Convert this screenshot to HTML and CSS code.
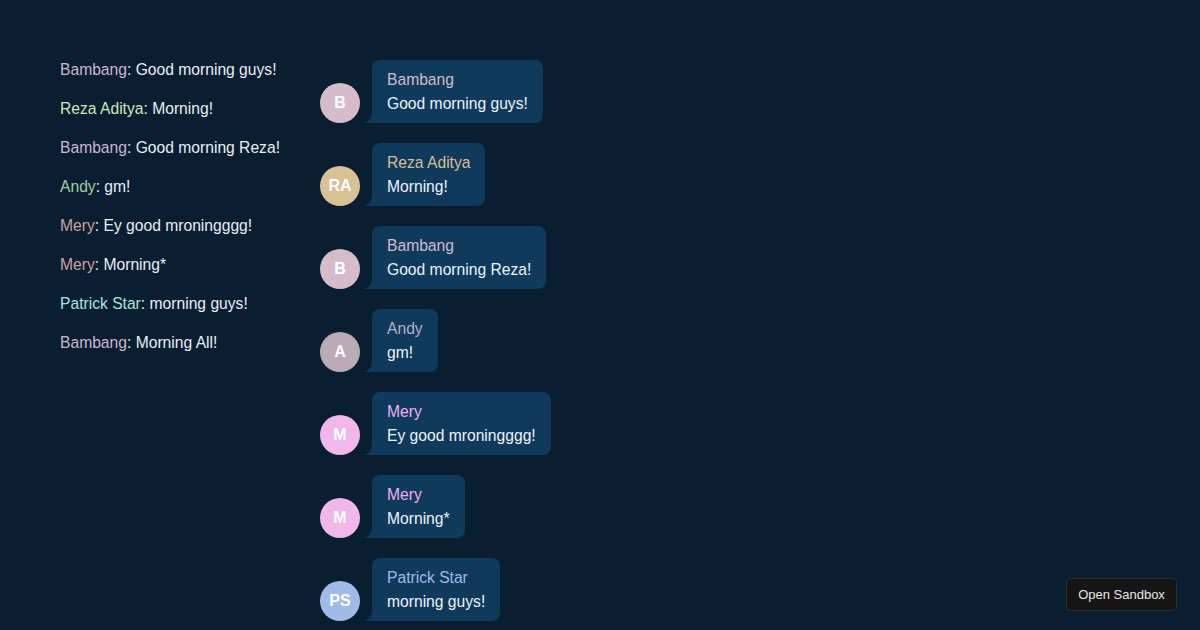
FILE: index.html
```html
<!DOCTYPE html>
<html>
<head>
<meta charset="utf-8">
<link rel="stylesheet" href="styles.css">
</head>
<body>
<div class="page">
  <div class="log">
    <div class="line"><span class="n-bambang">Bambang</span>: Good morning guys!</div>
    <div class="line"><span class="n-reza">Reza Aditya</span>: Morning!</div>
    <div class="line"><span class="n-bambang">Bambang</span>: Good morning Reza!</div>
    <div class="line"><span class="n-andy">Andy</span>: gm!</div>
    <div class="line"><span class="n-mery">Mery</span>: Ey good mroningggg!</div>
    <div class="line"><span class="n-mery">Mery</span>: Morning*</div>
    <div class="line"><span class="n-patrick">Patrick Star</span>: morning guys!</div>
    <div class="line"><span class="n-bambang">Bambang</span>: Morning All!</div>
  </div>
  <div class="chat">
    <div class="msg">
      <div class="avatar a-bambang">B</div>
      <div class="bubble"><div class="name b-bambang">Bambang</div><div class="text">Good morning guys!</div></div>
    </div>
    <div class="msg">
      <div class="avatar a-reza">RA</div>
      <div class="bubble"><div class="name b-reza">Reza Aditya</div><div class="text">Morning!</div></div>
    </div>
    <div class="msg">
      <div class="avatar a-bambang">B</div>
      <div class="bubble"><div class="name b-bambang">Bambang</div><div class="text">Good morning Reza!</div></div>
    </div>
    <div class="msg">
      <div class="avatar a-andy">A</div>
      <div class="bubble"><div class="name b-andy">Andy</div><div class="text">gm!</div></div>
    </div>
    <div class="msg">
      <div class="avatar a-mery">M</div>
      <div class="bubble"><div class="name b-mery">Mery</div><div class="text">Ey good mroningggg!</div></div>
    </div>
    <div class="msg">
      <div class="avatar a-mery">M</div>
      <div class="bubble"><div class="name b-mery">Mery</div><div class="text">Morning*</div></div>
    </div>
    <div class="msg">
      <div class="avatar a-patrick">PS</div>
      <div class="bubble"><div class="name b-patrick">Patrick Star</div><div class="text">morning guys!</div></div>
    </div>
  </div>
</div>
<button class="sandbox">Open Sandbox</button>
</body>
</html>
```

FILE: styles.css
```css
html, body {
  margin: 0;
  padding: 0;
  background: #0a1e31;
  height: 100%;
  overflow: hidden;
}
body {
  font-family: "Liberation Sans", Arial, sans-serif;
  font-size: 15.65px;
  color: #e8eef4;
}
.page {
  display: flex;
  padding: 60px 0 0 60px;
}
.log {
  width: 260px;
  display: flex;
  flex-direction: column;
  gap: 21px;
  padding-top: 1px;
}
.line {
  line-height: 18px;
}
.n-bambang { color: #cdb6cf; }
.n-reza { color: #cbeab6; }
.n-andy { color: #a9cba4; }
.n-mery { color: #cba39f; }
.n-patrick { color: #a4e6dc; }

.chat {
  display: flex;
  flex-direction: column;
  gap: 20px;
}
.msg {
  display: flex;
  align-items: flex-end;
  gap: 12px;
}
.avatar {
  width: 40px;
  height: 40px;
  border-radius: 50%;
  display: flex;
  align-items: center;
  justify-content: center;
  font-weight: bold;
  color: #ffffff;
  font-size: 16px;
  flex-shrink: 0;
}
.a-bambang { background: #d6bccb; }
.a-reza { background: #d8c195; }
.a-andy { background: #baabb6; }
.a-mery { background: #f1b6ea; }
.a-patrick { background: #a0bbe8; }

.bubble {
  position: relative;
  background: #0f3a5c;
  border-radius: 8px 8px 8px 0;
  padding: 8px 15px 7px;
  line-height: 24px;
}
.bubble::before {
  content: "";
  position: absolute;
  left: -8px;
  bottom: 0;
  width: 8px;
  height: 10px;
  background: radial-gradient(ellipse 8px 10px at 0 0, transparent 92%, #0f3a5c 100%);
}
.name { white-space: nowrap; }
.text { white-space: nowrap; color: #eef3f7; }
.b-bambang { color: #d3bccc; }
.b-reza { color: #d9bf92; }
.b-andy { color: #b3b3c3; }
.b-mery { color: #f2aeea; }
.b-patrick { color: #a2bbe2; }

.sandbox {
  position: fixed;
  right: 23px;
  bottom: 19px;
  width: 111px;
  height: 33px;
  background: #151515;
  color: #e6e6e6;
  border: 1px solid #2e2e2e;
  border-radius: 4px;
  font-family: "Liberation Sans", Arial, sans-serif;
  font-size: 13px;
  padding: 0;
}
```
